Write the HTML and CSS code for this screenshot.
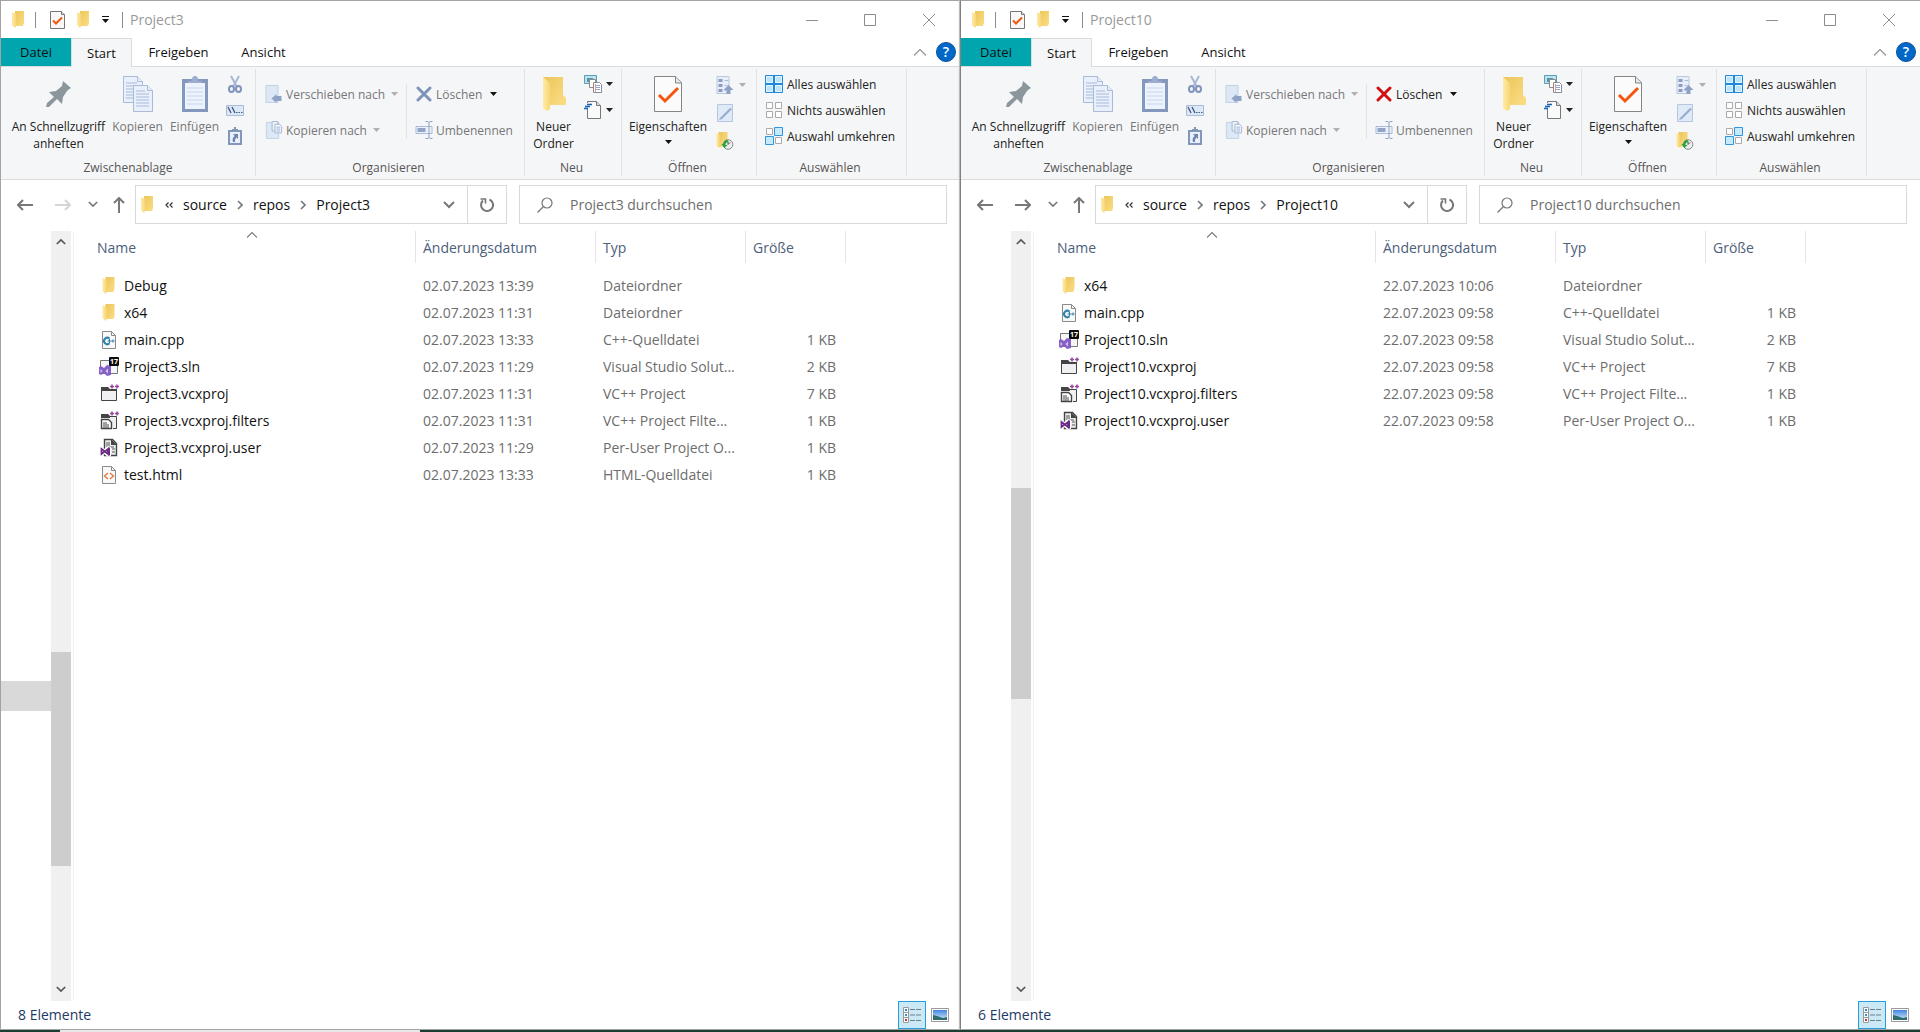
FILE: index.html
```html
<!DOCTYPE html>
<html lang="de">
<head>
<meta charset="utf-8">
<title>Explorer</title>
<link rel="stylesheet" href="styles.css">
</head>
<body>
<svg class="sprite" aria-hidden="true">
  <defs>
    <linearGradient id="gold" x1="0" y1="0" x2="1" y2="1"><stop offset="0" stop-color="#ecc65a"/><stop offset="1" stop-color="#fbdd85"/></linearGradient>
    <linearGradient id="flap" x1="0" y1="0" x2="1" y2="0"><stop offset="0" stop-color="#ffeaa9"/><stop offset="1" stop-color="#f8d775"/></linearGradient>
    <linearGradient id="sky" x1="0" y1="0" x2="0" y2="1"><stop offset="0" stop-color="#3f86e0"/><stop offset="1" stop-color="#d8ecfa"/></linearGradient>
  </defs>
  <symbol id="folder" viewBox="0 0 12 17"><path d="M3 0h9v12l-1 3H3z" fill="url(#gold)"/><path d="M0 1l4 2v12l-1 2-3-3z" fill="url(#flap)"/></symbol>
  <symbol id="bigfolder" viewBox="0 0 24 36"><path d="M1 1h20v18l3 3v7H6z" fill="url(#gold)"/><path d="M1 1l7 6v26l-3 2-4-3z" fill="url(#flap)"/></symbol>
  <symbol id="check" viewBox="0 0 28 36"><path d="M.5.5h21l6 6v29H.5z" fill="#fbfbfb" stroke="#858585"/><path d="M21.500.5v6.500h6" fill="#e6e6e6" stroke="#858585"/><path d="M5 19l6 6L24 12" fill="none" stroke="#f4550f" stroke-width="3"/></symbol>
  <symbol id="tick" viewBox="0 0 15 18"><path d="M.5.5h11l3 3v14H.5z" fill="#f8f8f8" stroke="#777"/><path d="M11.500.5v3h3" fill="#ddd" stroke="#777"/><path d="M3 9.500l3 3 6-6" fill="none" stroke="#f4550f" stroke-width="2"/></symbol>
  <symbol id="pin" viewBox="0 0 26 26"><path d="M17 0l8 7-3 2-1 1-4 6-1 7-5-5-8 8H0l1-4 7-6-5-5 7-1 6-5z" fill="#8b979d"/></symbol>
  <symbol id="copy" viewBox="0 0 30 36"><g fill="#e9f0fb" stroke="#a9bbd8"><path d="M.5.5h14l5 5v21H.5z"/><path d="M14.500.5v5h5"/><path d="M3 7h11M3 10h13M3 13h13M3 16h13M3 19h13M3 22h13"/><path d="M10.500 9.500h14l5 5v21h-19z"/><path d="M24.500 9.500v5h5M13 15h9M13 18h13M13 21h13M13 24h13M13 27h13M13 30h13"/></g></symbol>
  <symbol id="paste" viewBox="0 0 26 36"><rect y="3" width="26" height="33" fill="#8498be"/><rect x="3" y="7" width="20" height="26" fill="#edf3fc"/><path d="M6 7V5h4V2l2-2h2l2 2v3h4v2z" fill="#9dadd0"/><path d="M5 12h16M5 16h16M5 20h16M5 24h16M5 28h16" stroke="#c5d5ec"/></symbol>
  <symbol id="cut" viewBox="0 0 14 18"><path d="M3 1l6 11M11 1L5 12" stroke="#a9b8d4" stroke-width="2"/><g fill="none" stroke="#7f93bc" stroke-width="2"><ellipse cx="3.500" cy="14" rx="2.500" ry="3"/><ellipse cx="10.500" cy="14" rx="2.500" ry="3"/></g></symbol>
  <symbol id="path" viewBox="0 0 18 11"><path d="M.5.5h17v10H.5z" fill="#dce7f7" stroke="#a9bbd8"/><path d="M2 2l3 6M6 2l3 6" stroke="#4a5f86" stroke-width="1.400"/><path d="M10 7.500h1.500M12.500 7.500H14M15 7.500h1.500" stroke="#4a5f86"/></symbol>
  <symbol id="shortcut" viewBox="0 0 14 18"><path d="M0 3h14v15H0z" fill="#8295bb"/><path d="M2 5h10v11H2z" fill="#e9f0fb"/><path d="M4 4V2h2V0h2v2h2v2z" fill="#8295bb"/><path d="M5 7h5v5L8.500 10.500C7 12 7 13 7 15H5c-1-3 0-5 1.800-6z" fill="#6f83ad"/></symbol>
  <symbol id="move" viewBox="0 0 17 18"><path d="M.5.5h12v17H.5z" fill="#dde8f6" stroke="#c3d2e8"/><path d="M16 11v5h-5v2l-5-4.500L11 9v2z" fill="#8fa3c7"/></symbol>
  <symbol id="copyto" viewBox="0 0 17 19"><path d="M.5 1.500h13v17H.5z" fill="#dde8f6" stroke="#c3d2e8"/><path d="M6.500.5h6v10h-6z" fill="#edf3fb" stroke="#a3b5d3"/><path d="M9.500 3.500h5l2 2v7h-7zM11 6.500h4M11 8.500h4M11 10.500h4" fill="#f4f8fd" stroke="#a3b5d3"/></symbol>
  <symbol id="delete" viewBox="0 0 16 16"><path d="M2 2l12 12M14 2L2 14" stroke="currentColor" stroke-width="3" stroke-linecap="round"/></symbol>
  <symbol id="rename" viewBox="0 0 17 18"><path d="M.5 5.500h16v7H.5z" fill="#eef3fa" stroke="#a9bbd8"/><path d="M2 7h8v4H2z" fill="#91a3c6"/><path d="M13.500 1v16M10 .5h2.500l1 1 1-1H17M10 17.500h2.500l1-1 1 1H17" fill="none" stroke="#8ea0c2"/></symbol>
  <symbol id="newitem" viewBox="0 0 18 18"><path d="M.5.5h12v8H.5z" fill="#bfe2f0" stroke="#5b9ab8"/><path d="M3 3h6v4H3z" fill="#4f96a8"/><path d="M5.500 4.500h6v8h-6z" fill="#fff" stroke="#8c8c8c"/><path d="M9.500 7.500h6l2 2v8h-8z" fill="#fff" stroke="#8c8c8c"/><path d="M11 10.500h5M11 12.500h5M11 14.500h5" stroke="#87a8dc"/><path d="M11.500 9v8" stroke="#ee9b8f"/></symbol>
  <symbol id="easy" viewBox="0 0 18 18"><path d="M3.500.5h9l4 4v13h-13z" fill="#fafafa" stroke="#777"/><path d="M12.500.5v4h4" fill="#ddd" stroke="#777"/><path d="M3 2h5v6H2z" fill="#f5f6f7"/><path d="M3 3.500h5M1 5.500h5M0 7.500h4" stroke="#1a62b5" stroke-width="1.500"/></symbol>
  <symbol id="open" viewBox="0 0 17 18"><path d="M.5.5h12v17H.5z" fill="#e8eff9" stroke="#b8c8e0"/><path d="M2 3h4v3H2zM2 8h4v3H2zM2 13h4v3H2z" fill="#8a9ec3"/><path d="M8 4.500h4M8 9.500h3M8 14.500h2" stroke="#a9bbd8"/><path d="M12 9l5 5h-3v4h-4v-4H7z" fill="#8da0c5"/></symbol>
  <symbol id="edit" viewBox="0 0 16 18"><path d="M.5.500h15v17H.5z" fill="#dfe9f7" stroke="#b5c7e0"/><path d="M3 14L13 4l2 1L5 15l-3 1z" fill="#98accd"/></symbol>
  <symbol id="history" viewBox="0 0 17 18"><path d="M2 0h9v15H2z" fill="url(#gold)"/><path d="M0 1l3 2v13l-3-2z" fill="url(#flap)"/><circle cx="11.500" cy="12.500" r="4.800" fill="#eee" stroke="#888"/><path d="M11.500 9.500v3l2-2" fill="none" stroke="#555"/><path d="M11 8c-3 0-4 2-4 4H5l3 4 3-3H9c0-2 1-3 3-3z" fill="#29a33a"/></symbol>
  <symbol id="all" viewBox="0 0 18 18"><path d="M.5.5h17v17H.5z" fill="#bfe4f9" stroke="#1e88dc"/><path d="M9 0v18M0 9h18" stroke="#1e88dc" stroke-width="2"/><path d="M1.500 1.500h6v6h-6zM10.500 1.500h6v6h-6zM1.500 10.500h6v6h-6zM10.500 10.500h6v6h-6z" fill="none" stroke="#e2f4fd"/></symbol>
  <symbol id="none" viewBox="0 0 18 18"><path d="M1.500 1.500h6v6h-6zM10.500 1.500h6v6h-6zM1.500 10.500h6v6h-6zM10.500 10.500h6v6h-6z" fill="#fff" stroke="#aaa"/></symbol>
  <symbol id="invert" viewBox="0 0 18 18"><path d="M1.500 1.500h6v6h-6zM10.500 10.500h6v6h-6z" fill="#fff" stroke="#aaa"/><path d="M9.500.5h8v8h-8zM.5 9.500h8v8h-8z" fill="#c9e9fa" stroke="#2f97e2"/></symbol>
  <symbol id="caret" viewBox="0 0 7 4"><path d="M0 0h7L3.500 4z" fill="currentColor"/></symbol>
  <symbol id="qat" viewBox="0 0 7 7"><path d="M0 .5h7" stroke="#111"/><path d="M0 3h7L3.500 7z" fill="#111"/></symbol>
  <symbol id="min" viewBox="0 0 12 12"><path d="M0 6.500h12" stroke="#8c8c8c"/></symbol>
  <symbol id="max" viewBox="0 0 12 12"><path d="M.5.5h11v11H.5z" fill="none" stroke="#8c8c8c"/></symbol>
  <symbol id="close" viewBox="0 0 12 12"><path d="M0 0l12 12M12 0L0 12" stroke="#8c8c8c"/></symbol>
  <symbol id="up" viewBox="0 0 12 7"><path d="M0 6.500L6 .5l6 6" fill="none" stroke="currentColor" stroke-width="1.300"/></symbol>
  <symbol id="down" viewBox="0 0 12 8"><path d="M1 1l5 5 5-5" fill="none" stroke="currentColor" stroke-width="2"/></symbol>
  <symbol id="arrow" viewBox="0 0 16 12"><path d="M16 6H1M6 1L1 6l5 5" fill="none" stroke="currentColor" stroke-width="2"/></symbol>
  <symbol id="chev" viewBox="0 0 6 10"><path d="M1 1l4 4-4 4" fill="none" stroke="#777" stroke-width="1.600"/></symbol>
  <symbol id="more" viewBox="0 0 8 6"><path d="M3.500.5L1 3l2.500 2.500M7.500.5L5 3l2.500 2.500" fill="none" stroke="#333" stroke-width="1.200"/></symbol>
  <symbol id="reload" viewBox="0 0 14 15"><path d="M9.500 2.500A6 6 0 1 1 3 3.500" fill="none" stroke="#777" stroke-width="2"/><path d="M.5 2h5v4.500" fill="none" stroke="#777" stroke-width="1.600"/></symbol>
  <symbol id="lens" viewBox="0 0 16 16"><circle cx="10" cy="6" r="5" fill="none" stroke="#777" stroke-width="1.200"/><path d="M6.500 9.500L.5 15.500" stroke="#777" stroke-width="1.200"/></symbol>
  <symbol id="cpp" viewBox="0 0 20 20"><path d="M3.500 1.500h9l4 4v13h-13z" fill="#f8f8f8" stroke="#8a8a8a"/><path d="M12.500 1.500v4h4" fill="none" stroke="#8a8a8a"/><path d="M10.500 8.700a3.200 3.200 0 1 0 0 4.600" fill="none" stroke="#2f83ad" stroke-width="2"/><path d="M8.500 11h4M10.500 9v4M12.500 11h3M14 9.500v3" stroke="#2f83ad"/></symbol>
  <symbol id="html" viewBox="0 0 20 20"><path d="M3.500 1.500h9l4 4v13h-13z" fill="#f8f8f8" stroke="#8a8a8a"/><path d="M12.500 1.500v4h4" fill="none" stroke="#8a8a8a"/><path d="M9 8l-3.500 3L9 14M11 8l3.500 3L11 14" fill="none" stroke="#dd7a45" stroke-width="1.400"/></symbol>
  <symbol id="sln" viewBox="0 0 20 20"><path d="M1.500 3.500h17v13h-17z" fill="#f6f6f6" stroke="#777"/><path d="M0 10l2-1 3 2 3-3 4 1v9l-4 1-3-3-3 2-2-1z" fill="#8660c9"/><path d="M1.500 12l2 2-2 2zM9 11.500v5L6.500 14z" fill="#d8c8f2"/></symbol>
  <symbol id="vcx" viewBox="0 0 20 20"><path d="M2.500 5.500h15v11h-15z" fill="#f0f0f2" stroke="#444"/><path d="M2 3h7l2 2h7v2H2z" fill="#444"/><path d="M9 0h11v5h-9z" fill="#fff"/><path d="M11 2.500h4M13 .5v4M16 2.500h4M18 .5v4" stroke="#94479b" stroke-width="1.500"/></symbol>
  <symbol id="filters" viewBox="0 0 20 20"><path d="M10 5.500h7.500v12H14" fill="#f0f0f2" stroke="#444"/><path d="M2 3h7l2 2v2H2z" fill="#444"/><path d="M2.500 8.500h7l3 3v6h-10z" fill="#fff" stroke="#444" stroke-width="1.400"/><path d="M4 12h4M4 14h6M4 16h6" stroke="#444"/><path d="M11 2.500h4M13 .5v4M16 2.500h4M18 .5v4" stroke="#94479b" stroke-width="1.500"/></symbol>
  <symbol id="user" viewBox="0 0 20 20"><path d="M5.500 1.500h8l4 4v12h-12z" fill="#eee" stroke="#444" stroke-width="1.400"/><path d="M12 1l6 6h-6z" fill="#444"/><path d="M7 5h4M7 7h4M7 9h8M13 11h3M13 14h3" stroke="#555"/><path d="M2 9l3 2 4-3 3 1v9l-3 1-4-3-3 2z" fill="#fff"/><path d="M2.500 11l6.500 5V11l-6.500 5z" fill="#fff" stroke="#6c2a86" stroke-width="1.800"/><path d="M10 9.500v8" stroke="#6c2a86" stroke-width="2"/></symbol>
  <symbol id="details" viewBox="0 0 18 16"><path d="M.5.5h5v5h-5zM.5 5.500h5v5h-5zM.5 10.500h5v5h-5z" fill="#fff" stroke="#999"/><path d="M2 2h2v2H2z" fill="#3d8ac2"/><path d="M2 7h2v2H2z" fill="#3d8ac2"/><path d="M2 12h2v2H2z" fill="#c63c2b"/><path d="M7 2.500h5M13 2.500h5M7 8h5M13 8h5M7 13.500h5M13 13.500h5" stroke="#6e7f86"/></symbol>
  <symbol id="thumbs" viewBox="0 0 18 14"><path d="M.5.5h17v13H.5z" fill="#fff" stroke="#999"/><path d="M2 2h14v10H2z" fill="url(#sky)"/><path d="M2 7l4 1 6 2 4-1v3H2z" fill="#2d6d6b"/></symbol>
</svg>

<main class="desktop">
<section class="window" aria-label="Project3">
  <header class="titlebar">
    <svg class="folder"><use href="#folder"/></svg><i class="bar"></i>
    <button class="quick" aria-label="Eigenschaften"><svg class="s15x18"><use href="#tick"/></svg></button>
    <button class="quick" aria-label="Neuer Ordner"><svg class="folder"><use href="#folder"/></svg></button>
    <button class="quick" aria-label="Anpassen"><svg class="s7"><use href="#qat"/></svg></button><i class="bar"></i>
    <h1>Project3</h1>
    <div class="caption">
      <button aria-label="Minimieren"><svg class="s12"><use href="#min"/></svg></button>
      <button aria-label="Maximieren"><svg class="s12"><use href="#max"/></svg></button>
      <button aria-label="Schließen"><svg class="s12"><use href="#close"/></svg></button>
    </div>
  </header>
  <nav class="tabs">
    <button class="file">Datei</button><button class="active">Start</button><button>Freigeben</button><button>Ansicht</button>
    <button class="collapse" aria-label="Menüband minimieren"><svg class="s12x7"><use href="#up"/></svg></button>
    <button class="help" aria-label="Hilfe">?</button>
  </nav>
  <div class="ribbon">
    <section class="group clip">
      <div class="tools">
        <button class="big wide"><svg class="s26"><use href="#pin"/></svg>An Schnellzugriff anheften</button>
        <button class="big off"><svg class="s30x36"><use href="#copy"/></svg>Kopieren</button>
        <button class="big off"><svg class="s26x36"><use href="#paste"/></svg>Einfügen</button>
        <div class="stack icons">
          <button aria-label="Ausschneiden"><svg class="s14x18"><use href="#cut"/></svg></button>
          <button aria-label="Pfad kopieren"><svg class="s18x11"><use href="#path"/></svg></button>
          <button aria-label="Verknüpfung einfügen"><svg class="s14x18"><use href="#shortcut"/></svg></button>
        </div>
      </div>
      <h2>Zwischenablage</h2>
    </section>
    <section class="group org">
      <div class="tools">
        <div class="stack two first">
          <button class="off"><svg class="s18"><use href="#move"/></svg>Verschieben nach<svg class="caret"><use href="#caret"/></svg></button>
          <button class="off"><svg class="s18"><use href="#copyto"/></svg>Kopieren nach<svg class="caret"><use href="#caret"/></svg></button>
        </div>
        <div class="stack two">
          <button class="off del"><svg class="s18"><use href="#delete"/></svg>Löschen<svg class="caret"><use href="#caret"/></svg></button>
          <button class="off"><svg class="s18"><use href="#rename"/></svg>Umbenennen</button>
        </div>
      </div>
      <h2>Organisieren</h2>
    </section>
    <section class="group new">
      <div class="tools">
        <button class="big"><svg class="s24x36"><use href="#bigfolder"/></svg>Neuer Ordner</button>
        <div class="stack icons">
          <button aria-label="Neues Element"><svg class="s18"><use href="#newitem"/></svg><svg class="caret"><use href="#caret"/></svg></button>
          <button aria-label="Einfacher Zugriff"><svg class="s18"><use href="#easy"/></svg><svg class="caret"><use href="#caret"/></svg></button>
        </div>
      </div>
      <h2>Neu</h2>
    </section>
    <section class="group opn">
      <div class="tools">
        <button class="big"><svg class="s28x36"><use href="#check"/></svg>Eigenschaften<svg class="caret"><use href="#caret"/></svg></button>
        <div class="stack icons">
          <button class="off" aria-label="Öffnen"><svg class="s18"><use href="#open"/></svg><svg class="caret"><use href="#caret"/></svg></button>
          <button aria-label="Bearbeiten"><svg class="s18"><use href="#edit"/></svg></button>
          <button aria-label="Verlauf"><svg class="s18"><use href="#history"/></svg></button>
        </div>
      </div>
      <h2>Öffnen</h2>
    </section>
    <section class="group sel">
      <div class="tools">
        <div class="stack">
          <button><svg class="s18"><use href="#all"/></svg>Alles auswählen</button>
          <button><svg class="s18"><use href="#none"/></svg>Nichts auswählen</button>
          <button><svg class="s18"><use href="#invert"/></svg>Auswahl umkehren</button>
        </div>
      </div>
      <h2>Auswählen</h2>
    </section>
  </div>
  <div class="navrow">
    <button class="nav" aria-label="Zurück"><svg class="s16x12"><use href="#arrow"/></svg></button>
    <button class="nav fwd dim" aria-label="Vorwärts"><svg class="s16x12"><use href="#arrow"/></svg></button>
    <button class="nav small" aria-label="Zuletzt"><svg class="s10x7"><use href="#down"/></svg></button>
    <button class="nav upward" aria-label="Nach oben"><svg class="s16x12"><use href="#arrow"/></svg></button>
    <div class="address">
      <svg class="folder"><use href="#folder"/></svg><svg class="more"><use href="#more"/></svg>
      <a href="#">source</a><svg class="chev"><use href="#chev"/></svg><a href="#">repos</a><svg class="chev"><use href="#chev"/></svg><a href="#">Project3</a>
      <button class="drop" aria-label="Vorherige Orte"><svg class="s12x8"><use href="#down"/></svg></button>
      <button class="reload" aria-label="Aktualisieren"><svg class="s14x15"><use href="#reload"/></svg></button>
    </div>
    <label class="search"><svg class="s16"><use href="#lens"/></svg><input type="text" aria-label="Suchen" placeholder="Project3 durchsuchen"></label>
  </div>
  <div class="content">
    <div class="tree"><div class="picked"></div></div>
    <div class="scroll"><svg class="s10x7"><use href="#down"/></svg><div class="track t1"><div class="thumb"></div></div><svg class="s10x7"><use href="#down"/></svg></div>
    <div class="list">
      <table>
        <colgroup><col class="c1"><col class="c2"><col class="c3"><col class="c4"></colgroup>
        <thead><tr><th><span>Name<svg class="sort"><use href="#up"/></svg></span></th><th><span>Änderungsdatum</span></th><th><span>Typ</span></th><th><span>Größe</span></th></tr></thead>
        <tbody>
          <tr><td><div><svg class="ficon dir"><use href="#folder"/></svg>Debug</div></td><td>02.07.2023 13:39</td><td>Dateiordner</td><td></td></tr>
          <tr><td><div><svg class="ficon dir"><use href="#folder"/></svg>x64</div></td><td>02.07.2023 11:31</td><td>Dateiordner</td><td></td></tr>
          <tr><td><div><svg class="ficon"><use href="#cpp"/></svg>main.cpp</div></td><td>02.07.2023 13:33</td><td>C++-Quelldatei</td><td>1 KB</td></tr>
          <tr><td><div><i class="solution"><svg class="ficon"><use href="#sln"/></svg><b>17</b></i>Project3.sln</div></td><td>02.07.2023 11:29</td><td>Visual Studio Solut...</td><td>2 KB</td></tr>
          <tr><td><div><svg class="ficon"><use href="#vcx"/></svg>Project3.vcxproj</div></td><td>02.07.2023 11:31</td><td>VC++ Project</td><td>7 KB</td></tr>
          <tr><td><div><svg class="ficon"><use href="#filters"/></svg>Project3.vcxproj.filters</div></td><td>02.07.2023 11:31</td><td>VC++ Project Filte...</td><td>1 KB</td></tr>
          <tr><td><div><svg class="ficon"><use href="#user"/></svg>Project3.vcxproj.user</div></td><td>02.07.2023 11:29</td><td>Per-User Project O...</td><td>1 KB</td></tr>
          <tr><td><div><svg class="ficon"><use href="#html"/></svg>test.html</div></td><td>02.07.2023 13:33</td><td>HTML-Quelldatei</td><td>1 KB</td></tr>
        </tbody>
      </table>
    </div>
  </div>
  <footer class="status">
    <span>8 Elemente</span>
    <button class="on" aria-label="Details"><svg class="s18x16"><use href="#details"/></svg></button>
    <button aria-label="Große Symbole"><svg class="s18x14"><use href="#thumbs"/></svg></button>
  </footer>
</section>

<section class="window second" aria-label="Project10">
  <header class="titlebar">
    <svg class="folder"><use href="#folder"/></svg><i class="bar"></i>
    <button class="quick" aria-label="Eigenschaften"><svg class="s15x18"><use href="#tick"/></svg></button>
    <button class="quick" aria-label="Neuer Ordner"><svg class="folder"><use href="#folder"/></svg></button>
    <button class="quick" aria-label="Anpassen"><svg class="s7"><use href="#qat"/></svg></button><i class="bar"></i>
    <h1>Project10</h1>
    <div class="caption">
      <button aria-label="Minimieren"><svg class="s12"><use href="#min"/></svg></button>
      <button aria-label="Maximieren"><svg class="s12"><use href="#max"/></svg></button>
      <button aria-label="Schließen"><svg class="s12"><use href="#close"/></svg></button>
    </div>
  </header>
  <nav class="tabs">
    <button class="file">Datei</button><button class="active">Start</button><button>Freigeben</button><button>Ansicht</button>
    <button class="collapse" aria-label="Menüband minimieren"><svg class="s12x7"><use href="#up"/></svg></button>
    <button class="help" aria-label="Hilfe">?</button>
  </nav>
  <div class="ribbon">
    <section class="group clip">
      <div class="tools">
        <button class="big wide"><svg class="s26"><use href="#pin"/></svg>An Schnellzugriff anheften</button>
        <button class="big off"><svg class="s30x36"><use href="#copy"/></svg>Kopieren</button>
        <button class="big off"><svg class="s26x36"><use href="#paste"/></svg>Einfügen</button>
        <div class="stack icons">
          <button aria-label="Ausschneiden"><svg class="s14x18"><use href="#cut"/></svg></button>
          <button aria-label="Pfad kopieren"><svg class="s18x11"><use href="#path"/></svg></button>
          <button aria-label="Verknüpfung einfügen"><svg class="s14x18"><use href="#shortcut"/></svg></button>
        </div>
      </div>
      <h2>Zwischenablage</h2>
    </section>
    <section class="group org">
      <div class="tools">
        <div class="stack two first">
          <button class="off"><svg class="s18"><use href="#move"/></svg>Verschieben nach<svg class="caret"><use href="#caret"/></svg></button>
          <button class="off"><svg class="s18"><use href="#copyto"/></svg>Kopieren nach<svg class="caret"><use href="#caret"/></svg></button>
        </div>
        <div class="stack two">
          <button class="del ready"><svg class="s18"><use href="#delete"/></svg>Löschen<svg class="caret"><use href="#caret"/></svg></button>
          <button class="off"><svg class="s18"><use href="#rename"/></svg>Umbenennen</button>
        </div>
      </div>
      <h2>Organisieren</h2>
    </section>
    <section class="group new">
      <div class="tools">
        <button class="big"><svg class="s24x36"><use href="#bigfolder"/></svg>Neuer Ordner</button>
        <div class="stack icons">
          <button aria-label="Neues Element"><svg class="s18"><use href="#newitem"/></svg><svg class="caret"><use href="#caret"/></svg></button>
          <button aria-label="Einfacher Zugriff"><svg class="s18"><use href="#easy"/></svg><svg class="caret"><use href="#caret"/></svg></button>
        </div>
      </div>
      <h2>Neu</h2>
    </section>
    <section class="group opn">
      <div class="tools">
        <button class="big"><svg class="s28x36"><use href="#check"/></svg>Eigenschaften<svg class="caret"><use href="#caret"/></svg></button>
        <div class="stack icons">
          <button class="off" aria-label="Öffnen"><svg class="s18"><use href="#open"/></svg><svg class="caret"><use href="#caret"/></svg></button>
          <button aria-label="Bearbeiten"><svg class="s18"><use href="#edit"/></svg></button>
          <button aria-label="Verlauf"><svg class="s18"><use href="#history"/></svg></button>
        </div>
      </div>
      <h2>Öffnen</h2>
    </section>
    <section class="group sel">
      <div class="tools">
        <div class="stack">
          <button><svg class="s18"><use href="#all"/></svg>Alles auswählen</button>
          <button><svg class="s18"><use href="#none"/></svg>Nichts auswählen</button>
          <button><svg class="s18"><use href="#invert"/></svg>Auswahl umkehren</button>
        </div>
      </div>
      <h2>Auswählen</h2>
    </section>
  </div>
  <div class="navrow">
    <button class="nav" aria-label="Zurück"><svg class="s16x12"><use href="#arrow"/></svg></button>
    <button class="nav fwd" aria-label="Vorwärts"><svg class="s16x12"><use href="#arrow"/></svg></button>
    <button class="nav small" aria-label="Zuletzt"><svg class="s10x7"><use href="#down"/></svg></button>
    <button class="nav upward" aria-label="Nach oben"><svg class="s16x12"><use href="#arrow"/></svg></button>
    <div class="address">
      <svg class="folder"><use href="#folder"/></svg><svg class="more"><use href="#more"/></svg>
      <a href="#">source</a><svg class="chev"><use href="#chev"/></svg><a href="#">repos</a><svg class="chev"><use href="#chev"/></svg><a href="#">Project10</a>
      <button class="drop" aria-label="Vorherige Orte"><svg class="s12x8"><use href="#down"/></svg></button>
      <button class="reload" aria-label="Aktualisieren"><svg class="s14x15"><use href="#reload"/></svg></button>
    </div>
    <label class="search"><svg class="s16"><use href="#lens"/></svg><input type="text" aria-label="Suchen" placeholder="Project10 durchsuchen"></label>
  </div>
  <div class="content">
    <div class="tree"></div>
    <div class="scroll"><svg class="s10x7"><use href="#down"/></svg><div class="track t2"><div class="thumb"></div></div><svg class="s10x7"><use href="#down"/></svg></div>
    <div class="list">
      <table>
        <colgroup><col class="c1"><col class="c2"><col class="c3"><col class="c4"></colgroup>
        <thead><tr><th><span>Name<svg class="sort"><use href="#up"/></svg></span></th><th><span>Änderungsdatum</span></th><th><span>Typ</span></th><th><span>Größe</span></th></tr></thead>
        <tbody>
          <tr><td><div><svg class="ficon dir"><use href="#folder"/></svg>x64</div></td><td>22.07.2023 10:06</td><td>Dateiordner</td><td></td></tr>
          <tr><td><div><svg class="ficon"><use href="#cpp"/></svg>main.cpp</div></td><td>22.07.2023 09:58</td><td>C++-Quelldatei</td><td>1 KB</td></tr>
          <tr><td><div><i class="solution"><svg class="ficon"><use href="#sln"/></svg><b>17</b></i>Project10.sln</div></td><td>22.07.2023 09:58</td><td>Visual Studio Solut...</td><td>2 KB</td></tr>
          <tr><td><div><svg class="ficon"><use href="#vcx"/></svg>Project10.vcxproj</div></td><td>22.07.2023 09:58</td><td>VC++ Project</td><td>7 KB</td></tr>
          <tr><td><div><svg class="ficon"><use href="#filters"/></svg>Project10.vcxproj.filters</div></td><td>22.07.2023 09:58</td><td>VC++ Project Filte...</td><td>1 KB</td></tr>
          <tr><td><div><svg class="ficon"><use href="#user"/></svg>Project10.vcxproj.user</div></td><td>22.07.2023 09:58</td><td>Per-User Project O...</td><td>1 KB</td></tr>
        </tbody>
      </table>
    </div>
  </div>
  <footer class="status">
    <span>6 Elemente</span>
    <button class="on" aria-label="Details"><svg class="s18x16"><use href="#details"/></svg></button>
    <button aria-label="Große Symbole"><svg class="s18x14"><use href="#thumbs"/></svg></button>
  </footer>
</section>
</main>
<div class="taskbar"><div class="edge"></div></div>
</body>
</html>
```
FILE: styles.css
```css
* { box-sizing: border-box; }
body {
  margin: 0;
  min-height: 100vh;
  display: flex;
  flex-direction: column;
  font: 14px/20px "Open Sans", "Noto Sans", sans-serif;
  color: #111;
  background: #fff;
}
.sprite { position: absolute; width: 0; height: 0; }
svg { display: block; flex: none; }
button {
  margin: 0; padding: 0; border: 0; background: none;
  font: inherit; color: inherit;
  display: flex; align-items: center; justify-content: center;
}
h1, h2 { margin: 0; font-weight: 400; }
a { color: inherit; text-decoration: none; }

.desktop { flex: 1; display: flex; }
.window {
  flex: 1; min-width: 0;
  display: flex; flex-direction: column;
  border: 1px solid #a3a3a3; border-right: 0;
  background: #fff;
}
.second { border-left-color: #808080; box-shadow: -1px 0 1px #bbb; }

/* icon sizes */
.folder { width: 12px; height: 17px; }
.s7 { width: 7px; height: 7px; }
.s10x7 { width: 10px; height: 7px; }
.s12 { width: 12px; height: 12px; }
.s12x7 { width: 12px; height: 7px; }
.s12x8 { width: 12px; height: 8px; }
.s14x15 { width: 14px; height: 15px; }
.s14x18 { width: 14px; height: 18px; }
.s15x18 { width: 15px; height: 18px; }
.s16 { width: 16px; height: 16px; }
.s16x12 { width: 16px; height: 12px; }
.s18 { width: 18px; height: 18px; }
.s18x11 { width: 18px; height: 11px; }
.s18x14 { width: 18px; height: 14px; }
.s18x16 { width: 18px; height: 16px; }
.s24x36 { width: 24px; height: 36px; }
.s26 { width: 26px; height: 26px; }
.s26x36 { width: 26px; height: 36px; }
.s28x36 { width: 28px; height: 36px; }
.s30x36 { width: 30px; height: 36px; }
.caret { width: 7px; height: 4px; }

/* title bar */
.titlebar { height: 37px; display: flex; align-items: center; padding: 0 1px 0 11px; }
.bar { width: 1px; height: 16px; background: #8c8c8c; }
.titlebar .folder + .bar { margin: 0 9px 0 11px; }
.quick { width: 25px; height: 26px; }
.quick:last-of-type { width: 21px; }
.titlebar h1 { flex: 1; font-size: 14px; color: #999; margin-left: 7px; }
.quick + .bar { margin-left: 6px; }
.caption { display: flex; }
.caption button { width: 58px; height: 36px; }
.caption button:last-child { width: 60px; }

/* tabs */
.tabs { height: 29px; display: flex; border-bottom: 1px solid #dadbdc; font-size: 13px; }
.tabs button { width: 93px; height: 28px; }
.tabs .file { width: 70px; background: #00a5ae; }
.tabs .active {
  width: 61px; height: 29px;
  border: 1px solid #dadbdc; border-bottom: 0;
  background: #f5f6f7;
}
.tabs button:nth-child(4) { width: 77px; }
.tabs .collapse { width: 20px; margin-left: auto; color: #999; }
.tabs .help {
  width: 20px; height: 20px; margin: 4px 4px 0 6px;
  border: 1px solid #0a4f9b; border-radius: 50%;
  background: #0068c6; color: #fff; font-weight: 600; font-size: 14px;
}

/* ribbon */
.ribbon {
  height: 113px; display: flex;
  padding-top: 2px;
  border-bottom: 1px solid #dadbdc;
  background: #f5f6f7;
  font-size: 12px; line-height: 17px; color: #222;
}
.group { height: 107px; display: flex; flex-direction: column; border-right: 1px solid #e0e2e4; }
.group h2 { font-size: 12px; line-height: 17px; text-align: center; color: #555; padding-right: 3px; }
.group.clip h2 { padding-right: 0; }
.tools { flex: 1; display: flex; align-items: flex-start; }
.clip { width: 255px; }
.clip .tools { padding-left: 7px; }
.org { width: 269px; }
.new { width: 97px; }
.opn { width: 135px; }
.sel { width: 150px; }
.off { color: #777; }
.big { width: 57px; flex-direction: column; justify-content: flex-start; padding-top: 7px; }
.big svg:first-child { margin-bottom: 6px; }
.big .caret { margin-top: 5px; color: #111; }
.wide { width: 101px; }
.wide svg:first-child { margin: 5px 0 11px; }
.stack { display: flex; flex-direction: column; padding-top: 2px; }
.stack button { height: 26px; justify-content: flex-start; gap: 4px; white-space: nowrap; }
.clip .icons button { width: 24px; justify-content: center; }
.two { padding: 12px 0 0 8px; gap: 10px; }
.two button { gap: 3px; }
.two .caret { color: #b0b0b0; margin-left: 3px; }
.two .del .caret { color: #111; margin-left: 5px; }
.first { width: 151px; padding-left: 9px; background: linear-gradient(#e0e2e4, #e0e2e4) right 15px / 1px 55px no-repeat; }
.del .s18 { padding: 1px; color: #7f93b8; }
.ready .s18 { color: #d20f12; }
.new .big, .opn .big { margin-right: 2px; }
.new .icons button { gap: 4px; }
.opn .big { width: 92px; }
.opn .icons button { gap: 5px; height: 28px; }
.icons .off .caret { color: #b0b0b0; }
.sel .stack { padding-left: 8px; }

/* address row */
.navrow { height: 51px; display: flex; align-items: center; padding: 0 13px 2px 12px; color: #777; }
.nav { width: 24px; height: 24px; }
.fwd { margin-left: 14px; }
.fwd svg { transform: scaleX(-1); }
.dim { color: #d5d5d5; }
.small { margin-left: 6px; }
.upward { margin: 0 4px 0 2px; }
.upward svg { transform: rotate(90deg); }
.address {
  flex: 0 1 372px; height: 39px; min-width: 0;
  display: flex; align-items: center; padding-left: 5px;
  border: 1px solid #d9d9d9; color: #111;
}
.more { width: 8px; height: 6px; margin: 0 10px 0 12px; }
.chev { width: 6px; height: 10px; margin: 0 10px; }
.drop { width: 36px; height: 37px; margin-left: auto; color: #777; }
.reload { width: 39px; height: 37px; border-left: 1px solid #d9d9d9; }
.search {
  flex: 1; height: 39px; margin-left: 12px;
  display: flex; align-items: center; gap: 17px; padding-left: 17px;
  border: 1px solid #d9d9d9;
}
.search input {
  flex: 1; min-width: 0; border: 0; padding: 0; background: none; outline: 0;
  font: inherit; color: #666;
}
.search input::placeholder { color: #6d6d6d; opacity: 1; }

/* file area */
.content { flex: 1; display: flex; }
.tree { width: 50px; padding-top: 450px; }
.picked { height: 30px; background: #d9d9d9; }
.scroll {
  width: 20px; display: flex; flex-direction: column; align-items: center;
  padding: 7px 0 8px; background: #f0f0f0; color: #555;
}
.scroll svg:first-child { transform: scaleY(-1); }
.track { flex: 1; align-self: stretch; display: flex; flex-direction: column; }
.track::before { content: ""; }
.t1::before { flex: 406; }
.t1 .thumb { flex: 213; }
.t1::after { content: ""; flex: 120; }
.t2::before { flex: 242; }
.t2 .thumb { flex: 211; }
.t2::after { content: ""; flex: 286; }
.thumb { background: #cdcdcd; }
.list { flex: 1; margin-left: 2px; border-left: 1px solid #f2f2f2; }
table { width: 772px; table-layout: fixed; border-collapse: collapse; }
.c1 { width: 342px; }
.c2 { width: 180px; }
.c3 { width: 150px; }
.c4 { width: 100px; }
th { height: 41px; padding: 0; vertical-align: top; text-align: left; font-weight: 400; color: #4c607a; }
th span { position: relative; display: block; height: 32px; line-height: 34px; padding-left: 7px; border-right: 1px solid #e5e5e5; }
th:first-child span { padding-left: 23px; }
.sort { position: absolute; left: 173px; top: 1px; width: 10px; height: 6px; color: #777; }
td { height: 27px; padding: 0 0 0 7px; color: #6d6d6d; white-space: nowrap; }
td:first-child { padding-left: 25px; color: #111; }
td:last-child { padding-right: 10px; text-align: right; }
td div { display: flex; align-items: center; gap: 5px; }
.ficon { width: 20px; height: 20px; }
.dir { height: 17px; padding-right: 1px; }
.solution { position: relative; font-style: normal; }
.solution b {
  position: absolute; top: 0; right: 0; width: 10px; height: 9px;
  border-radius: 1px; background: #0a0a0a; color: #fff;
  font-size: 7px; line-height: 9px; text-align: center;
}

/* status bar */
.status { height: 28px; display: flex; align-items: center; padding: 0 6px 0 17px; color: #1e3a64; }
.status span { flex: 1; }
.status button { width: 28px; height: 28px; }
.status .on { border: 1px solid #26a0da; background: #cbe8f6; }

.taskbar { height: 2px; background: #1c3d33; padding-left: 60px; }
.edge { width: 360px; height: 2px; background: #e8e8e8; }
```
